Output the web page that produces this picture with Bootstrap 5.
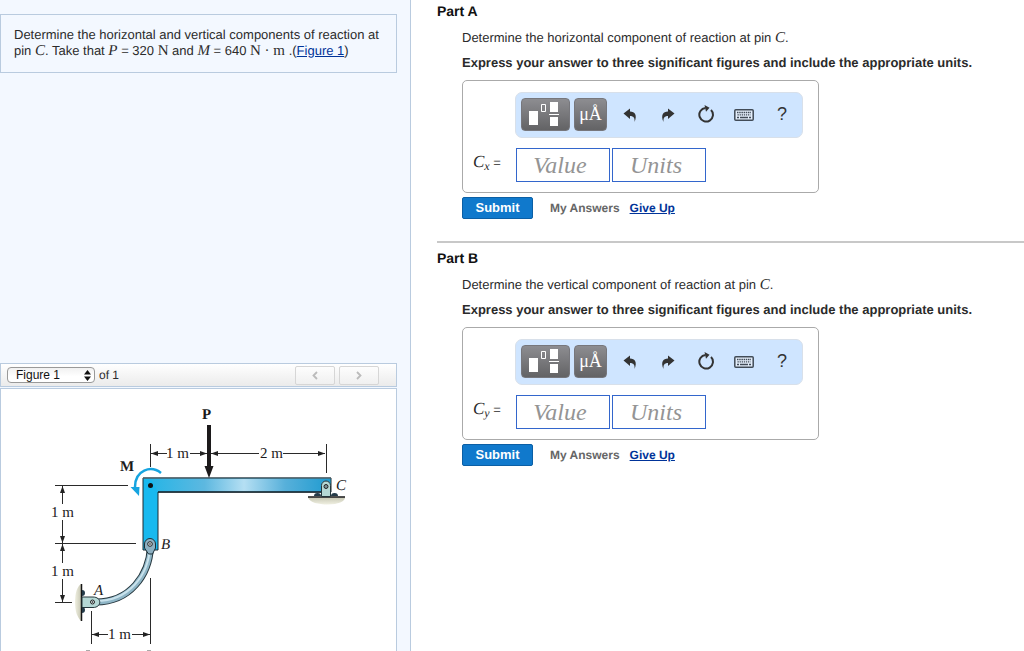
<!DOCTYPE html>
<html lang="en">
<head>
<meta charset="utf-8">
<meta name="viewport" content="width=device-width, initial-scale=1">
<title>Reactions at pin C</title>
<link href="https://cdn.jsdelivr.net/npm/bootstrap@5.3.0/dist/css/bootstrap.min.css" rel="stylesheet">
<style>
  body { font-family: "Liberation Sans", Arial, sans-serif; font-size: 13px; line-height: 16px; color: #2b2b2b; background: #fff; text-rendering: geometricPrecision; }
  a { color: #003399; }
  .pane-left { width: 40%; min-width: 411px; background: #f3f8ff; border-right: 1px solid #b9cbdf; padding: 14px 13px 0 0; }
  .problem { border: 1px solid #b9cbdf; padding: 12px 12px 13px 13px; }
  .math, .unit { font-family: "Liberation Serif", "Times New Roman", serif; font-size: 15px; line-height: 1px; }
  .math { font-style: italic; }
  .fig-bar { height: 24px; border: 1px solid #b9cbdf; background: linear-gradient(#fff, #ebebeb); padding: 0 17px 0 6px; font-size: 12px; }
  .fig-select { width: 88px; height: 16px; border: 1px solid #999; border-radius: 4px; appearance: none; background: linear-gradient(#f1f1f1, #fff 60%); padding: 0 18px 0 8px; font-size: 12px; line-height: 14px; color: #111; }
  .fig-arrows { right: 4px; top: 3px; pointer-events: none; }
  .fig-nav { width: 40px; height: 19px; border: 1px solid #d6d6d6; border-radius: 2px; background: linear-gradient(#fdfdfd, #f0f0f0); padding: 0; }
  .fig-view { border: 1px solid #b9cbdf; border-bottom: 0; background: #fff; margin-top: 1px; }
  .fig-view text { font-family: "Liberation Serif", "Times New Roman", serif; font-size: 15px; fill: #1c1a1b; }
  .pane-right { padding: 3px 0 0 26px; min-width: 0; }
  .part-title { font-size: 14px; line-height: 16px; font-weight: 700; color: #111; margin: 0; }
  .part-body { padding: 11px 0 0 25px; }
  .part-body p { margin: 0 0 9px; }
  .part + .part { border-top: 2px solid #c8c8c8; margin-top: 22px; padding-top: 7px; }
  .answer-box { width: 357px; max-width: 100%; border: 1px solid #aaa; border-radius: 5px; padding: 11px 15px 10px 10px; }
  .tools { height: 46px; margin-left: 42px; background: #cfe5ff; border: 1px solid #d8e0ea; border-radius: 7px; padding: 0 1px 2px 5px; }
  .tool-dark { height: 33px; border: 1px solid #77777c; border-radius: 4px; background: linear-gradient(#8d8d91, #636365); padding: 0; color: #fff; flex-shrink: 0; }
  .tool-tpl { width: 49px; }
  .tool-unit { width: 33px; font-family: "Liberation Serif", serif; font-size: 18px; line-height: 30px; }
  .tool-plain { width: 38px; height: 33px; border: 0; background: none; padding: 0; color: #333; font-size: 18px; }
  .answer-row { margin-top: 10px; }
  .answer-label { width: 43px; padding-bottom: 4px; white-space: nowrap; }
  .answer-label .math { font-size: 17px; }
  .answer-label sub { font-size: 12px; }
  .answer-field { width: 94px; height: 34px; border: 1px solid #3366cc; background: #fff; border-radius: 0; padding: 0 6px 0 0; text-align: center; font-family: "Liberation Serif", serif; font-style: italic; font-size: 24px; color: #333; }
  .answer-field + .answer-field { margin-left: 2px; }
  .answer-field::placeholder { color: #949494; opacity: 1; }
  .submit { width: 71px; height: 22px; border: 1px solid #0b5fa5; border-radius: 2px; background: #1079cc; color: #fff; padding: 0; font-size: 13px; font-weight: 700; line-height: 18px; }
  .part-actions { font-size: 12px; font-weight: 700; padding-top: 4px; }
  .muted { color: #666; margin-left: 17px; margin-right: 10px; }
</style>
</head>
<body>
<svg width="0" height="0" class="position-absolute" aria-hidden="true">
  <symbol id="i-tpl" viewBox="0 0 47 31"><path fill="#fff" d="M7 12h9v14H7zM28 3h8v10h-8zM28 18h8v9h-8zM27 15h10v1H27z"/><path fill="none" stroke="#fff" d="M19.500 5.500h4v7h-4z"/></symbol>
  <symbol id="i-undo" viewBox="0 0 16 16"><path fill="#333" d="M1.500 6.500L8 1.500v3c5 0 7.500 4 4.500 10.500C13 11 11.500 9 8 9v3z"/></symbol>
  <symbol id="i-redo" viewBox="0 0 16 16"><path fill="#333" d="M14.500 6.500L8 1.500v3C3 4.500.5 8.500 3.500 15 3 11 4.500 9 8 9v3z"/></symbol>
  <symbol id="i-reset" viewBox="0 0 18 18"><path fill="none" stroke="#333" stroke-width="2" d="M14 5A6.800 6.800 0 1 1 8.500 3"/><path fill="#333" d="M7.500 0l5 2.800-3.500 4z"/></symbol>
  <symbol id="i-keys" viewBox="0 0 20 12"><rect x=".8" y=".8" width="18.400" height="10.400" rx="1" fill="#e4eefb" stroke="#414b57" stroke-width="1.500"/><path stroke="#414b57" stroke-width="1.300" fill="none" d="M3 3.500h14" stroke-dasharray="1.500 .7"/><path stroke="#414b57" stroke-width="1.300" fill="none" d="M3.500 5.800h13" stroke-dasharray="1.300 .8"/><path stroke="#414b57" stroke-width="1.300" fill="none" d="M3 8.500h2m1 0h8m1 0h2"/></symbol>
</svg>

<div class="d-flex min-vh-100">
  <aside class="pane-left d-flex flex-column flex-shrink-0">
    <section class="problem">
      <p class="m-0">Determine the horizontal and vertical components of reaction at pin <span class="math">C</span>. Take that <span class="math">P</span> = 320 <span class="unit">N</span> and <span class="math">M</span> = 640 <span class="unit">N · m</span> .(<a href="#figure">Figure 1</a>)</p>
    </section>

    <section id="figure" class="mt-auto">
      <div class="fig-bar d-flex align-items-center">
        <div class="position-relative d-flex">
          <select class="fig-select" id="fig-no" aria-label="Figure"><option>Figure 1</option></select>
          <svg class="fig-arrows position-absolute" width="7" height="11" viewBox="0 0 7 11" aria-hidden="true"><path fill="#111" d="M3.500 0L7 4.500H0zM3.500 11L0 6.500h7z"/></svg>
        </div>
        <label for="fig-no" class="ms-1">of 1</label>
        <button type="button" class="fig-nav ms-auto d-flex align-items-center justify-content-center" aria-label="Previous figure"><svg width="6" height="9" viewBox="0 0 6 9"><path d="M5 1L1.500 4.500 5 8" fill="none" stroke="#bbb" stroke-width="1.800"/></svg></button>
        <button type="button" class="fig-nav ms-1 d-flex align-items-center justify-content-center" aria-label="Next figure"><svg width="6" height="9" viewBox="0 0 6 9"><path d="M1 1l3.500 3.500L1 8" fill="none" stroke="#bbb" stroke-width="1.800"/></svg></button>
      </div>
      <div class="fig-view">
        <svg class="d-block w-100" viewBox="1 389 395 262" role="img" aria-label="Frame with pins A, B and C, load P and moment M">
          <defs>
            <linearGradient id="beam" x1="0" x2="1"><stop offset="0" stop-color="#27b5e6"/><stop offset=".3" stop-color="#5db8e0"/><stop offset=".52" stop-color="#b5dff3"/><stop offset=".75" stop-color="#57b0da"/><stop offset="1" stop-color="#1f9bd0"/></linearGradient>
            <linearGradient id="soil" x1="0" y1="0" x2="0" y2="1"><stop offset="0" stop-color="#c9c9b5"/><stop offset="1" stop-color="#f0f0e2"/></linearGradient>
            <linearGradient id="wall"><stop offset="0" stop-color="#f0f0e2"/><stop offset="1" stop-color="#c9c9b5"/></linearGradient>
            <marker id="tip" viewBox="0 0 7 5" refX="7" refY="2.500" markerWidth="7" markerHeight="5" markerUnits="userSpaceOnUse" orient="auto-start-reverse"><path d="M0 0l7 2.500L0 5z" fill="#222"/></marker>
          </defs>
          <!-- link AB -->
          <path d="M150.500 547C149 575 130 602 96 602" fill="none" stroke="#26363d" stroke-width="7"/>
          <path d="M150.500 547C149 575 130 602 96 602" fill="none" stroke="#8fb6c7" stroke-width="5"/>
          <path d="M150 547C148.500 575 129 601 96 601" fill="none" stroke="#c9e2ec" stroke-width="2"/>
          <!-- frame -->
          <path d="M143 478h188v14h-173v58h-15z" fill="#18b9ef" stroke="#202a30"/>
          <path d="M151 479h179v12.500H158z" fill="url(#beam)"/>
          <path d="M143 477.700h188" stroke="#66737a" stroke-width="1.500"/>
          <path d="M158 492h173" stroke="#17262e" stroke-width="1.500"/>
          <circle cx="150.500" cy="485.500" r="2.500" fill="#111"/>
          <!-- pin B -->
          <path d="M144.500 548v-4a5.500 5.500 0 0 1 11 0v4l-3 6h-4z" fill="#8db0c2" stroke="#1d3038"/>
          <circle cx="150" cy="544" r="2.300" fill="#dbe7ec" stroke="#222"/><circle cx="150" cy="544" r=".8" fill="#111"/>
          <!-- pin C -->
          <path d="M308 497.500h37c0 4-7 7-17 7s-18-2-20-7z" fill="url(#soil)"/>
          <path d="M308 497h37" stroke="#151515" stroke-width="1.500"/>
          <path d="M314 496q0-3 3.500-3t3.500 3zM331 496q0-3 3.500-3t3.500 3z" fill="#243b49"/>
          <path d="M321.500 496.500v-11a4.500 4.500 0 0 1 9 0v11z" fill="#b5d8d5" stroke="#26383d"/>
          <circle cx="326" cy="486.500" r="2" fill="#7b929a" stroke="#222"/>
          <!-- pin A -->
          <path d="M81 584c-4 3-6 9-6 18s2 15 6 19z" fill="url(#wall)"/>
          <path d="M81.500 584v37" stroke="#151515" stroke-width="1.500"/>
          <path d="M82 590q3 0 3 3t-3 3zM82 607q3 0 3 3t-3 3z" fill="#243b49"/>
          <path d="M82 597h11c9 0 9 10.500 0 10.500H82z" fill="#b5d8d5" stroke="#26383d"/>
          <circle cx="92.500" cy="602" r="2" fill="#e3eeee" stroke="#222"/><circle cx="92.500" cy="602" r=".8" fill="#111"/>
          <!-- dimension lines -->
          <g stroke="#2a2a2a" fill="none">
            <path d="M150.500 444v23M326.500 444v29M55 485.500h73M55 543.500h81M55 602.500h17M91.500 611v33M150.500 578v66"/>
            <path d="M167 453.500h-16" marker-end="url(#tip)"/><path d="M190 453.500h17" marker-end="url(#tip)"/>
            <path d="M259 453.500h-48" marker-end="url(#tip)"/><path d="M283 453.500h42" marker-end="url(#tip)"/>
            <path d="M62.500 504v-18" marker-end="url(#tip)"/><path d="M62.500 520v23" marker-end="url(#tip)"/>
            <path d="M62.500 563v-19" marker-end="url(#tip)"/><path d="M62.500 579v23" marker-end="url(#tip)"/>
            <path d="M108 634.500H92" marker-end="url(#tip)"/><path d="M132 634.500h18" marker-end="url(#tip)"/>
            <path d="M86 650.500h4M147 650.500h4" stroke="#aaa"/>
          </g>
          <!-- load P and moment M -->
          <path d="M209 425v42" stroke="#1c1a1b" stroke-width="4"/><path d="M204.500 466h9l-4.500 12z" fill="#1c1a1b"/>
          <path d="M161 473c-10-8-26-3-26 14" fill="none" stroke="#16a4e0" stroke-width="2.500"/><path d="M130.500 487h9l-.5 9z" fill="#16a4e0"/>
          <text x="202" y="419" font-weight="bold">P</text>
          <text x="120" y="471" font-weight="bold">M</text>
          <text x="166" y="458">1 m</text><text x="260" y="458">2 m</text>
          <text x="51" y="517">1 m</text><text x="51" y="576">1 m</text><text x="108" y="639">1 m</text>
          <text x="336" y="490" font-style="italic">C</text><text x="161" y="549" font-style="italic">B</text><text x="94" y="595" font-style="italic">A</text>
        </svg>
      </div>
    </section>
  </aside>

  <main class="pane-right flex-grow-1">
    <section class="part">
      <h2 class="part-title">Part A</h2>
      <div class="part-body">
        <p>Determine the horizontal component of reaction at pin <span class="math">C</span>.</p>
        <p class="fw-bold">Express your answer to three significant figures and include the appropriate units.</p>
        <div class="answer-box">
          <div class="tools d-flex align-items-center">
            <button type="button" class="tool-dark tool-tpl" aria-label="Templates"><svg class="d-block" width="47" height="31"><use href="#i-tpl"/></svg></button>
            <button type="button" class="tool-dark tool-unit ms-1">μÅ</button>
            <div class="d-flex ms-auto">
              <button type="button" class="tool-plain" aria-label="Undo"><svg width="16" height="16"><use href="#i-undo"/></svg></button>
              <button type="button" class="tool-plain" aria-label="Redo"><svg width="16" height="16"><use href="#i-redo"/></svg></button>
              <button type="button" class="tool-plain" aria-label="Reset"><svg width="18" height="18"><use href="#i-reset"/></svg></button>
              <button type="button" class="tool-plain" aria-label="Keyboard"><svg width="20" height="12"><use href="#i-keys"/></svg></button>
              <button type="button" class="tool-plain">?</button>
            </div>
          </div>
          <div class="answer-row d-flex align-items-center">
            <label class="answer-label" for="value-a"><span class="math">C<sub>x</sub></span> =</label>
            <input class="answer-field" id="value-a" type="text" placeholder="Value">
            <input class="answer-field" type="text" placeholder="Units" aria-label="Units">
          </div>
        </div>
        <div class="part-actions d-flex align-items-center">
          <button type="submit" class="submit">Submit</button><span class="muted">My Answers</span><a href="#give-up-a">Give Up</a>
        </div>
      </div>
    </section>

    <section class="part">
      <h2 class="part-title">Part B</h2>
      <div class="part-body">
        <p>Determine the vertical component of reaction at pin <span class="math">C</span>.</p>
        <p class="fw-bold">Express your answer to three significant figures and include the appropriate units.</p>
        <div class="answer-box">
          <div class="tools d-flex align-items-center">
            <button type="button" class="tool-dark tool-tpl" aria-label="Templates"><svg class="d-block" width="47" height="31"><use href="#i-tpl"/></svg></button>
            <button type="button" class="tool-dark tool-unit ms-1">μÅ</button>
            <div class="d-flex ms-auto">
              <button type="button" class="tool-plain" aria-label="Undo"><svg width="16" height="16"><use href="#i-undo"/></svg></button>
              <button type="button" class="tool-plain" aria-label="Redo"><svg width="16" height="16"><use href="#i-redo"/></svg></button>
              <button type="button" class="tool-plain" aria-label="Reset"><svg width="18" height="18"><use href="#i-reset"/></svg></button>
              <button type="button" class="tool-plain" aria-label="Keyboard"><svg width="20" height="12"><use href="#i-keys"/></svg></button>
              <button type="button" class="tool-plain">?</button>
            </div>
          </div>
          <div class="answer-row d-flex align-items-center">
            <label class="answer-label" for="value-b"><span class="math">C<sub>y</sub></span> =</label>
            <input class="answer-field" id="value-b" type="text" placeholder="Value">
            <input class="answer-field" type="text" placeholder="Units" aria-label="Units">
          </div>
        </div>
        <div class="part-actions d-flex align-items-center">
          <button type="submit" class="submit">Submit</button><span class="muted">My Answers</span><a href="#give-up-b">Give Up</a>
        </div>
      </div>
    </section>
  </main>
</div>
<script src="https://cdn.jsdelivr.net/npm/bootstrap@5.3.0/dist/js/bootstrap.bundle.min.js"></script>
</body>
</html>
